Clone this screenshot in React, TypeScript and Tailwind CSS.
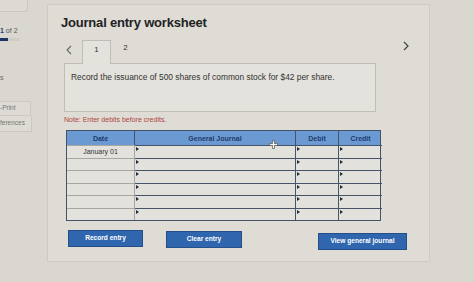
import React from 'react'

const rows = ['January 01', '', '', '', '', '']

function Marker() {
  return <span className="absolute left-[1px] top-[1px] w-0 h-0 border-t-[2px] border-b-[2px] border-l-[3px] border-t-transparent border-b-transparent border-l-[#1f2a3a]" />
}

export default function App() {
  return (
    <div className="w-[474px] h-[282px] overflow-hidden bg-[#d9d7d0] flex font-['Liberation_Sans',sans-serif] text-[#333]">
      {/* left sidebar, cut off by the photo */}
      <div className="w-[47px] shrink-0 flex flex-col">
        <div className="w-[28px] h-[12px] border-r border-b border-[#c9c7c0] rounded-br-[3px] bg-[#dcdad3]" />
        <div className="mt-[15px] text-[7px] text-[#555] leading-none">
          <span className="text-[#1d3f7a] font-bold">1</span> of 2
        </div>
        <div className="mt-[4px] w-[20px] h-[3px] bg-[#cfcdc6] flex">
          <div className="w-[8px] bg-[#1d3566]" />
        </div>
        <div className="mt-[33px] text-[7px] text-[#666] leading-none">s</div>
        <div className="mt-[20px] w-[31px] h-[15px] border border-l-0 border-[#cbc9c2] bg-[#dddbd4] flex items-center text-[6.5px] text-[#777] leading-none">
          <span>-Print</span>
        </div>
        <div className="w-[32px] h-[16px] border border-l-0 border-t-0 border-[#cbc9c2] bg-[#dddbd4] flex items-center text-[6.5px] text-[#777] leading-none">
          <span>ferences</span>
        </div>
      </div>

      {/* main panel */}
      <div className="mt-[4px] w-[383px] h-[258px] shrink-0 bg-[#dedcd5] border border-[#cdcbc4] px-[16px] flex flex-col">
        <div className="mt-[11px] ml-[-3px] text-[13px] font-bold text-[#222] leading-none tracking-[-0.2px]">Journal entry worksheet</div>

        {/* tabs */}
        <div className="mt-[10px] flex items-end h-[24px] relative z-10">
          <div className="w-[18px] pl-[2px] pb-[8px]">
            <svg width="6" height="10" viewBox="0 0 6 10"><path d="M5 1L1 5l4 4" fill="none" stroke="#666" strokeWidth="1.1" /></svg>
          </div>
          <div className="w-[29px] h-[24px] border border-b-0 border-[#bfbdb6] bg-[#e4e2dc] flex justify-center pt-[5px] text-[8px] text-[#333] leading-none -mb-px">1</div>
          <div className="w-[29px] h-[24px] flex justify-center pt-[5px] text-[8px] text-[#333] leading-none">2</div>
          <div className="ml-auto mr-[4px] pb-[12px]">
            <svg width="6" height="10" viewBox="0 0 6 10"><path d="M1 1l4 4-4 4" fill="none" stroke="#444" strokeWidth="1.2" /></svg>
          </div>
        </div>

        {/* question box */}
        <div className="w-[312px] h-[49px] border border-[#bfbdb6] bg-[#e4e2dc] px-[6px] pt-[9px] text-[8.4px] text-[#333] leading-none">
          Record the issuance of 500 shares of common stock for $42 per share.
        </div>

        <div className="mt-[4px] text-[7px] text-[#b0453f] leading-none">Note: Enter debits before credits.</div>

        {/* table */}
        <div className="mt-[7px] ml-[2px] w-[315px] border border-[#44526a] relative">
          <div className="grid grid-cols-[68px_161px_43px_43px] h-[14px] bg-[#6b9ad2] text-[7px] font-bold text-[#1e3a6e] leading-none">
            <div className="flex items-center justify-center border-r border-[#44526a]">Date</div>
            <div className="flex items-center justify-center border-r border-[#44526a]">General Journal</div>
            <div className="flex items-center justify-center border-r border-[#44526a]">Debit</div>
            <div className="flex items-center justify-center">Credit</div>
          </div>
          {rows.map((d, i) => (
            <div key={i} className="grid grid-cols-[68px_161px_43px_43px] h-[12.5px] bg-[#e3e1db] text-[7px] text-[#333] leading-none">
              <div className="flex items-center justify-center border-t border-r border-[#a7a6a2]">{d}</div>
              <div className="relative border-t-[1.5px] border-r-[1.5px] border-[#46546a]"><Marker /></div>
              <div className="relative border-t-[1.5px] border-r-[1.5px] border-[#46546a]"><Marker /></div>
              <div className="relative border-t-[1.5px] border-[#46546a]"><Marker /></div>
            </div>
          ))}
          {/* mouse cursor */}
          <svg className="absolute left-[202px] top-[9px]" width="9" height="9" viewBox="0 0 9 9">
            <path d="M3.5 0.5h2v3h3v2h-3v3h-2v-3h-3v-2h3z" fill="#f4f4f4" stroke="#555" strokeWidth="0.7" />
          </svg>
        </div>

        {/* buttons */}
        <div className="mt-[9px] ml-[4px] flex items-start text-[6.6px] font-bold text-white leading-none">
          <div className="w-[75px] h-[17px] bg-[#2f66ae] border border-[#244f88] flex items-center justify-center">Record entry</div>
          <div className="ml-[23px] mt-[1px] w-[76px] h-[17px] bg-[#2f66ae] border border-[#244f88] flex items-center justify-center">Clear entry</div>
          <div className="ml-[76px] mt-[3px] w-[89px] h-[17px] bg-[#2f66ae] border border-[#244f88] flex items-center justify-center">View general journal</div>
        </div>
      </div>
    </div>
  )
}
